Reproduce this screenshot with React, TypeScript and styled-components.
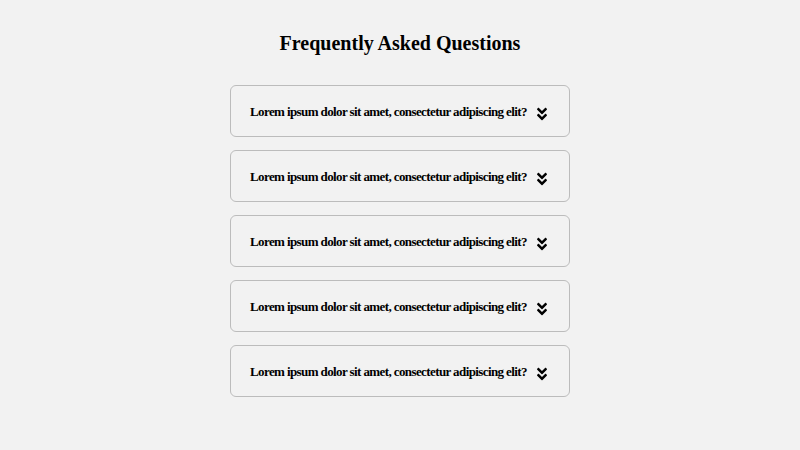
import { FC } from 'react';
import styled, { createGlobalStyle } from 'styled-components';
import { FaAngleDoubleDown } from 'react-icons/fa';

const GlobalStyle = createGlobalStyle`
  body {
    margin: 0;
    background: #f2f2f2;
    font-family: "Liberation Serif", "Times New Roman", serif;
    color: #000;
  }
`;

const Page = styled.main`
  display: flex;
  flex-direction: column;
  align-items: center;
  padding-top: 31px;
`;

const Title = styled.h1`
  margin: 0 0 30px;
  font-size: 20px;
  line-height: 24px;
  font-weight: 700;
`;

const List = styled.div`
  display: flex;
  flex-direction: column;
  gap: 13px;
  width: 340px;
`;

const Item = styled.div`
  display: flex;
  align-items: center;
  gap: 7px;
  height: 52px;
  box-sizing: border-box;
  padding: 0 19px;
  border: 1px solid #bcbcbc;
  border-radius: 6px;
  background: #f2f2f2;
  cursor: pointer;
`;

const Question = styled.span`
  font-size: 13px;
  letter-spacing: -0.6px;
  font-weight: 700;
  white-space: nowrap;
  margin-top: 1px;
`;

const Arrow = styled(FaAngleDoubleDown)`
  flex-shrink: 0;
  font-size: 16px;
  margin-top: 6px;
`;

const questions = Array.from({ length: 5 }, (_, i) => ({
  id: i,
  text: 'Lorem ipsum dolor sit amet, consectetur adipiscing elit?',
}));

const App: FC = () => (
  <>
    <GlobalStyle />
    <Page>
      <Title>Frequently Asked Questions</Title>
      <List>
        {questions.map(q => (
          <Item key={q.id}>
            <Question>{q.text}</Question>
            <Arrow />
          </Item>
        ))}
      </List>
    </Page>
  </>
);

export default App;
